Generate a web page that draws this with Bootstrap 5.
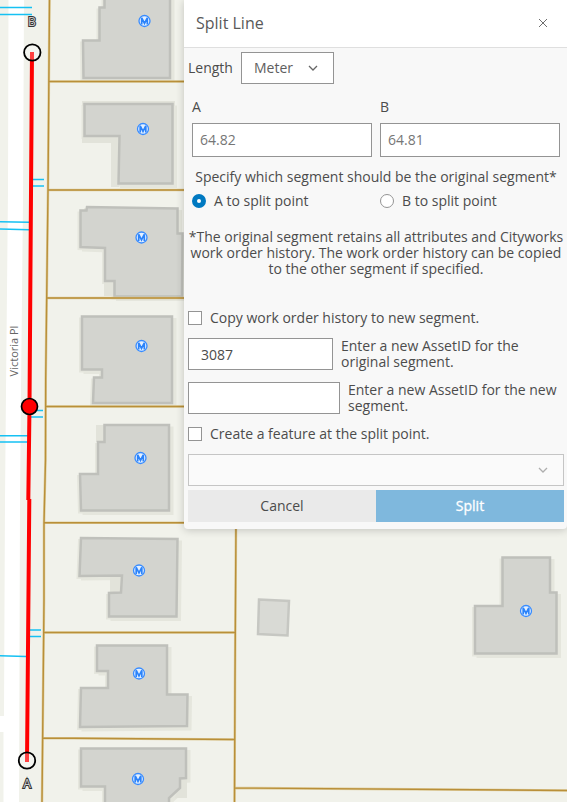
<!DOCTYPE html>
<html lang="en">
<head>
<meta charset="utf-8">
<meta name="viewport" content="width=device-width, initial-scale=1">
<title>Split Line</title>
<link href="https://cdn.jsdelivr.net/npm/bootstrap@5.3.0/dist/css/bootstrap.min.css" rel="stylesheet">
<style>
  body { font-family: "Open Sans", sans-serif; font-size: 14px; line-height: 16px; color: #4c4c4c; background: #f1f2eb; }
  .map-stage { min-height: 100vh; }
  .map-canvas { inset: 0; }
  .map-canvas text { font-family: "Open Sans", sans-serif; }
  .tool-panel { width: 383px; max-width: 100%; background: #f8f8f8; border-radius: 0 0 4px 4px; box-shadow: 0 1px 8px rgba(0,0,0,.2); }
  .tool-head { height: 48px; padding: 0 12px 2px; background: #fff; border-bottom: 1px solid #dfdfdf; }
  .tool-head h1 { font-size: 16px; line-height: 24px; font-weight: 400; color: #595959; }
  .close-tool { width: 24px; height: 24px; color: #6e6e6e; }
  .tool-body { padding: 4px 3px 7px 4px; }
  .tool-body .form-control, .tool-body .form-select {
    height: 32px; padding: 0 12px; font-size: 14px; line-height: 16px; color: #4c4c4c;
    border: 1px solid #949494; border-radius: 0; background-color: #fff;
  }
  .tool-body .form-select {
    background-image: url("data:image/svg+xml,%3Csvg xmlns='http://www.w3.org/2000/svg' viewBox='0 0 10 6'%3E%3Cpath d='M1 1l4 4 4-4' fill='none' stroke='%23666' stroke-width='1.3'/%3E%3C/svg%3E");
    background-size: 10px 6px; background-position: right 15px center; color: #5e5e5e;
  }
  .tool-body .form-select:disabled { opacity: .5; background-color: #fdfdfd; }
  .tool-body .unit-select { width: 93px; }
  .tool-body .distance { height: 34px; padding: 0 7px 2px; color: #767676; }
  .tool-body .id-original { width: 145px; }
  .tool-body .id-new { width: 152px; }
  .tool-body .form-check-input { width: 14px; height: 14px; margin: 0; border: 1px solid #949494; flex: none; float: none; }
  .tool-body .form-check-input[type=checkbox] { border-radius: 0; }
  .tool-body .form-check-input[type=radio]:checked { border: 5px solid #0079c1; background: #fff; }
  .tool-body fieldset { margin-top: 12px; }
  .segment-legend { font-size: 14px; line-height: 16px; padding-bottom: 8px; }
  .stack { display: flex; flex-direction: column; gap: 12px; }
  .distances { margin-top: 15px; }
  .note { margin: 20px 0 33px; }
  .action { height: 32px; padding: 0; border: 0; border-radius: 0; font-size: 14px; line-height: 16px; }
  .action-cancel, .action-cancel:hover { background: #eaeaea; color: #4c4c4c; }
  .action-split, .action-split:disabled { background: #7fb8dd; color: #fff; opacity: 1; -webkit-text-stroke: .3px #fff; }
</style>
</head>
<body>
<main class="map-stage position-relative overflow-hidden">
  <svg class="map-canvas position-absolute w-100 h-100" role="img" aria-label="Parcel map with a line from A to B">
    <defs>
      <g id="meter">
        <circle r="5.5" fill="#e4f0ff" stroke="#388cff" stroke-width="1.3"/>
        <path d="M-2.8 3.6V-3.2L0 2.3 2.8-3.2V3.6" fill="none" stroke="#2b83fa" stroke-width="1.7"/>
      </g>
      <g id="houses">
        <path d="M104.500-5V7.500H99.500V40.500H83L83.500 78H170V-5z"/>
        <path d="M84.500 104H172.500V183.500H118.500L119.500 136H84.500z"/>
        <path d="M80.500 210.500H86.500L87 207 177.500 208.500V233.500H182.500L182 296.500H114.500V281H105V248L80.500 247z"/>
        <path d="M82 316.500H172V403H93L94 377.500H102V369.500H82z"/>
        <path d="M104.500 425H169V510.500H81L80 474H98V442H104.500z"/>
        <path d="M81 538L177.500 539 176.500 616.500H109V593L121 592.500 122 575.500 79.500 576z"/>
        <path d="M97 645.500H167V694.500H187.500L187 726 80 727 81 688H108V671H97z"/>
        <path d="M81 748.500H186V778L180 778.500V788L169 798V808H105V786.500H81z"/>
        <path d="M502.500 557.500H550V592.500H556.500V653.500H475V606H502.500z"/>
      </g>
    </defs>
    <path d="M8.500 0H24L23 200 21 390 20 500 19 802H3.500V732H0V716H4L5 500 6 390 8 190z" fill="#fff"/>
    <use href="#houses" x="3" y="3" fill="#e5e6dd" stroke="#e5e6dd" stroke-width="3"/>
    <use href="#houses" x="-2" y="2" fill="#e5e6dd" stroke="#e5e6dd" stroke-width="2"/>
    <path d="M82 101H175V106H82zM82 136H118V143H82zM111 143H119V187H111z" fill="#e2e3da"/>
    <path d="M96 425h9v17h-9zM104 281h11v15h-11zM110 576h12v17h-12zM180 778h7v20h-12z" fill="#e2e3da"/>
    <use href="#houses" fill="#d3d4cf" stroke="#bfc0bb" stroke-width="2.500"/>
    <path d="M259 599.500L289 601 287.500 635.500 258 634z" fill="#d9dad5" stroke="#c6c7c2" stroke-width="2.500"/>
    <g fill="none" stroke="#dfcf9f" stroke-width="2.600">
      <path id="lots" d="M49.500 0L48 190 45.700 380 45.500 460 44 523V600L42 802M49 81.500H190M48 190H190M47 298H190M45.500 406.500H190M44 522.700H236M44 632.500H235M42.500 738L235 739.500M236 522L235 680 234.500 802M235 788L567 790.500 1400 797"/>
    </g>
    <use href="#lots" fill="none" stroke="#b98f39" stroke-width="1.400"/>
    <path d="M0 7.500H32M0 14.500H32M32 179.500H44M32 186H44M0 221.700L29 222.300M0 229L29 229.700M31 410.500H43M31 417H43M0 435.700H28M0 442H28M29 630H41M29 636.500H41M0 655.700L26 656.500" fill="none" stroke="#16c1f3" stroke-width="1.600"/>
    <path d="M32 52L29.500 406 28.300 500M29.300 499L27 762" fill="none" stroke="#f00" stroke-width="4"/>
    <circle cx="32.300" cy="52.500" r="8.200" fill="#fff" fill-opacity=".25" stroke="#000" stroke-width="1.800"/>
    <circle cx="27" cy="760.500" r="8.200" fill="#fff" fill-opacity=".25" stroke="#000" stroke-width="1.800"/>
    <circle cx="29.500" cy="406.500" r="8" fill="#f00" stroke="#000" stroke-width="1.700"/>
    <g font-size="12" text-anchor="middle" fill="#ccc" stroke="#333" stroke-width="2" paint-order="stroke">
      <text x="32" y="26">B</text>
      <text x="27" y="788">A</text>
    </g>
    <text transform="translate(18 351) rotate(-90)" text-anchor="middle" font-size="11" fill="#666">Victoria Pl</text>
    <use href="#meter" x="144.500" y="21"/><use href="#meter" x="143" y="129"/><use href="#meter" x="141.500" y="237.500"/>
    <use href="#meter" x="141.500" y="346"/><use href="#meter" x="140.500" y="458"/><use href="#meter" x="139" y="570.500"/>
    <use href="#meter" x="139" y="673.500"/><use href="#meter" x="138" y="779"/><use href="#meter" x="526" y="611"/>
  </svg>

  <section class="tool-panel position-relative ms-auto">
    <header class="tool-head d-flex align-items-center justify-content-between">
      <h1 class="m-0">Split Line</h1>
      <button type="button" class="close-tool btn p-0 border-0 d-flex align-items-center justify-content-center" aria-label="Close">
        <svg width="10" height="10" viewBox="0 0 10 10" fill="none" stroke="currentColor"><path d="M1 1l8 8M9 1l-8 8"/></svg>
      </button>
    </header>
    <form class="tool-body">
      <div class="d-flex align-items-center gap-2">
        <label for="unit">Length</label>
        <select id="unit" class="form-select unit-select"><option>Meter</option></select>
      </div>
      <div class="distances row gx-2 px-1">
        <div class="col">
          <label for="distA" class="d-block mb-2">A</label>
          <input id="distA" class="form-control distance" value="64.82">
        </div>
        <div class="col">
          <label for="distB" class="d-block mb-2">B</label>
          <input id="distB" class="form-control distance" value="64.81">
        </div>
      </div>
      <fieldset class="px-1">
        <legend class="segment-legend m-0 text-center text-nowrap">Specify which segment should be the original segment*</legend>
        <div class="row gx-2">
          <div class="col d-flex align-items-center gap-2">
            <input class="form-check-input" type="radio" name="keep" id="keepA" checked><label for="keepA">A to split point</label>
          </div>
          <div class="col d-flex align-items-center gap-2">
            <input class="form-check-input" type="radio" name="keep" id="keepB"><label for="keepB">B to split point</label>
          </div>
        </div>
      </fieldset>
      <p class="note text-center">*The original segment retains all attributes and Cityworks work order history. The work order history can be copied to the other segment if specified.</p>
      <div class="stack">
        <div class="d-flex align-items-center gap-2">
          <input class="form-check-input" type="checkbox" id="copyHistory"><label for="copyHistory">Copy work order history to new segment.</label>
        </div>
        <div class="d-flex align-items-center gap-2">
          <input id="idOriginal" class="form-control id-original flex-shrink-0" value="3087"><label for="idOriginal">Enter a new AssetID for the original segment.</label>
        </div>
        <div class="d-flex align-items-center gap-2">
          <input id="idNew" class="form-control id-new flex-shrink-0"><label for="idNew">Enter a new AssetID for the new segment.</label>
        </div>
        <div class="d-flex align-items-center gap-2">
          <input class="form-check-input" type="checkbox" id="createFeature"><label for="createFeature">Create a feature at the split point.</label>
        </div>
        <select class="form-select" aria-label="Feature layer" disabled><option></option></select>
      </div>
      <div class="d-flex mt-1">
        <button type="button" class="action action-cancel btn flex-fill w-50">Cancel</button>
        <button type="submit" class="action action-split btn flex-fill w-50" disabled>Split</button>
      </div>
    </form>
  </section>
</main>
<script src="https://cdn.jsdelivr.net/npm/bootstrap@5.3.0/dist/js/bootstrap.bundle.min.js"></script>
</body>
</html>
